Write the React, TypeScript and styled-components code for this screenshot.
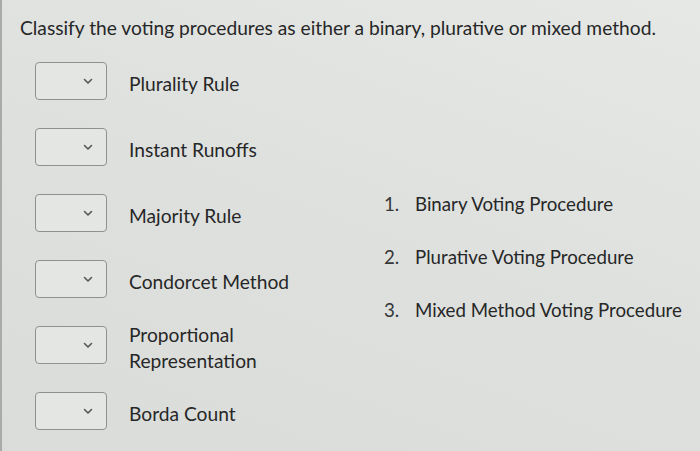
import React from "react";
import styled, { createGlobalStyle } from "styled-components";

const GlobalStyle = createGlobalStyle`
  html, body {
    margin: 0;
    padding: 0;
    background: #dfe1df;
  }
  body {
    font-family: Lato, "Open Sans", sans-serif;
    color: #262727;
  }
`;

const Page = styled.div`
  width: 700px;
  height: 451px;
  box-sizing: border-box;
  overflow: hidden;
  border-left: 2px solid #a9abaa;
  background: linear-gradient(200deg, #e6e8e6 0%, #dfe1df 45%, #dadcda 100%);
  padding: 15px 0 0 18px;
`;

const Question = styled.h1`
  margin: 0;
  font-size: 19.2px;
  font-weight: 400;
  line-height: 26px;
`;

const Body = styled.div`
  display: flex;
  flex-flow: row nowrap;
  margin-top: 21px;
`;

const Pairs = styled.div`
  display: flex;
  flex-direction: column;
  gap: 28px;
  width: 364px;
`;

const Pair = styled.div`
  display: flex;
  align-items: center;
  height: 38px;
  padding-left: 15px;
`;

const SelectBox = styled.div`
  position: relative;
  width: 72px;
  height: 38px;
  box-sizing: border-box;
  border: 1.5px solid #8f9190;
  border-radius: 4px;
  background: #e4e6e4;
  flex-shrink: 0;

  & > svg {
    position: absolute;
    left: 47px;
    top: 15px;
  }
`;

const Label = styled.div`
  margin-left: 22px;
  padding-top: 5px;
  font-size: 19.2px;
  line-height: 26px;
`;

const Answers = styled.ol`
  list-style: none;
  margin: 129px 0 0 0;
  padding: 0;
  display: flex;
  flex-direction: column;
  gap: 27px;
`;

const Answer = styled.li`
  display: grid;
  grid-template-columns: 31px auto;
  font-size: 18.7px;
  line-height: 26px;
`;

const Num = styled.span`
  color: #363737;
`;

const Chevron = () => (
  <svg width="10" height="7" viewBox="0 0 10 7">
    <path d="M1.5 1.5 L5 5 L8.5 1.5" fill="none" stroke="#555" strokeWidth="1.6" strokeLinecap="round" strokeLinejoin="round" />
  </svg>
);

const items = [
  ["Plurality Rule"],
  ["Instant Runoffs"],
  ["Majority Rule"],
  ["Condorcet Method"],
  ["Proportional", "Representation"],
  ["Borda Count"],
];

const answers = [
  "Binary Voting Procedure",
  "Plurative Voting Procedure",
  "Mixed Method Voting Procedure",
];

export default function App() {
  return (
    <Page>
      <GlobalStyle />
      <Question>
        Classify the voting procedures as either a binary, plurative or mixed method.
      </Question>
      <Body>
        <Pairs>
          {items.map((lines, i) => (
            <Pair key={i}>
              <SelectBox>
                <Chevron />
              </SelectBox>
              <Label>
                {lines.map((l, j) => (
                  <div key={j}>{l}</div>
                ))}
              </Label>
            </Pair>
          ))}
        </Pairs>
        <Answers>
          {answers.map((a, i) => (
            <Answer key={i}>
              <Num>{i + 1}.</Num>
              <span>{a}</span>
            </Answer>
          ))}
        </Answers>
      </Body>
    </Page>
  );
}
